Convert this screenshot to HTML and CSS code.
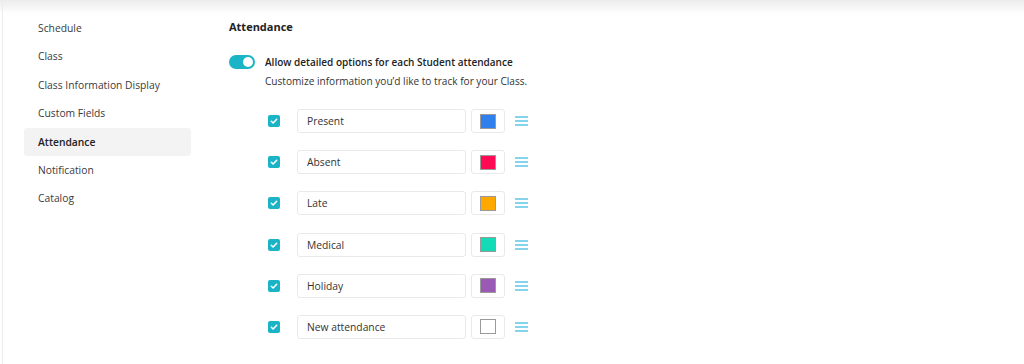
FILE: index.html
```html
<!DOCTYPE html>
<html lang="en">
<head>
    <meta charset="UTF-8">
    <title>Class Settings - Attendance</title>
    <link rel="stylesheet" href="styles.css">
</head>
<body>
    <div class="topshade"></div>
    <div class="page">
        <ul class="sidebar">
            <li>Schedule</li>
            <li>Class</li>
            <li>Class Information Display</li>
            <li>Custom Fields</li>
            <li class="active">Attendance</li>
            <li>Notification</li>
            <li>Catalog</li>
        </ul>

        <div class="content">
            <h2 class="title">Attendance</h2>

            <div class="option">
                <span class="toggle on"><span class="knob"></span></span>
                <div class="option-text">
                    <div class="option-label">Allow detailed options for each Student attendance</div>
                    <div class="option-hint">Customize information you’d like to track for your Class.</div>
                </div>
            </div>

            <div class="rows">
                <div class="row">
                    <span class="check"><svg viewBox="0 0 12 12"><path d="M3.3 6.2l1.8 1.8 3.6-3.8"/></svg></span>
                    <input class="name" type="text" value="Present">
                    <span class="swatch"><span class="color" style="background:#2f80ed"></span></span>
                    <span class="drag"><i></i><i></i><i></i></span>
                </div>
                <div class="row">
                    <span class="check"><svg viewBox="0 0 12 12"><path d="M3.3 6.2l1.8 1.8 3.6-3.8"/></svg></span>
                    <input class="name" type="text" value="Absent">
                    <span class="swatch"><span class="color" style="background:#ff0a54"></span></span>
                    <span class="drag"><i></i><i></i><i></i></span>
                </div>
                <div class="row">
                    <span class="check"><svg viewBox="0 0 12 12"><path d="M3.3 6.2l1.8 1.8 3.6-3.8"/></svg></span>
                    <input class="name" type="text" value="Late">
                    <span class="swatch"><span class="color" style="background:#ffa800"></span></span>
                    <span class="drag"><i></i><i></i><i></i></span>
                </div>
                <div class="row">
                    <span class="check"><svg viewBox="0 0 12 12"><path d="M3.3 6.2l1.8 1.8 3.6-3.8"/></svg></span>
                    <input class="name" type="text" value="Medical">
                    <span class="swatch"><span class="color" style="background:#12dbb5"></span></span>
                    <span class="drag"><i></i><i></i><i></i></span>
                </div>
                <div class="row">
                    <span class="check"><svg viewBox="0 0 12 12"><path d="M3.3 6.2l1.8 1.8 3.6-3.8"/></svg></span>
                    <input class="name" type="text" value="Holiday">
                    <span class="swatch"><span class="color" style="background:#9b59b6"></span></span>
                    <span class="drag"><i></i><i></i><i></i></span>
                </div>
                <div class="row">
                    <span class="check"><svg viewBox="0 0 12 12"><path d="M3.3 6.2l1.8 1.8 3.6-3.8"/></svg></span>
                    <input class="name" type="text" value="New attendance">
                    <span class="swatch"><span class="color" style="background:#ffffff"></span></span>
                    <span class="drag"><i></i><i></i><i></i></span>
                </div>
            </div>
        </div>
    </div>
</body>
</html>
```
FILE: styles.css
```css
* {
    box-sizing: border-box;
}
body {
    margin: 0;
    background: white;
    font-family: "Open Sans", "Liberation Sans", sans-serif;
    color: #333;
    position: relative;
}
.topshade {
    position: absolute;
    top: 0;
    left: 0;
    right: 0;
    height: 14px;
    background: linear-gradient(#ececec, rgba(255, 255, 255, 0));
}
.page {
    display: flex;
    margin-left: 2px;
    min-height: 364px;
    border-left: 1px solid #ececec;
}

/* left menu */
.sidebar {
    list-style: none;
    margin: 0;
    padding: 14px 0 0 21px;
    width: 188px;
}
.sidebar li {
    height: 28.4px;
    line-height: 28.4px;
    padding-left: 14px;
    font-size: 10.3px;
    color: #3a3a3a;
    border-radius: 3px;
}
.sidebar li.active {
    background: #f3f3f3;
    font-weight: 600;
    color: #222;
}

/* right side */
.content {
    padding-left: 38px;
    padding-top: 19px;
}
.title {
    margin: 0;
    font-size: 11px;
    font-weight: 700;
    color: #222;
    line-height: 16px;
}
.option {
    display: flex;
    margin-top: 19px;
}
.toggle {
    width: 26px;
    height: 14px;
    border-radius: 7px;
    background: #1ab4c6;
    margin-top: 1px;
    margin-right: 10px;
    position: relative;
    flex-shrink: 0;
}
.toggle .knob {
    position: absolute;
    top: 2px;
    right: 2px;
    width: 10px;
    height: 10px;
    border-radius: 50%;
    background: white;
}
.option-label {
    font-size: 10px;
    font-weight: 600;
    color: #222;
    line-height: 16px;
}
.option-hint {
    font-size: 10.1px;
    color: #333;
    line-height: 15px;
    margin-top: 4px;
}

.rows {
    margin-top: 20px;
    padding-left: 39px;
    display: flex;
    flex-direction: column;
    gap: 17.2px;
}
.row {
    display: flex;
    align-items: center;
    height: 24px;
}
.check {
    width: 12px;
    height: 12px;
    border-radius: 2px;
    background: #1ab4c6;
    display: flex;
    margin-right: 17px;
}
.check svg {
    width: 12px;
    height: 12px;
    fill: none;
    stroke: white;
    stroke-width: 1.5;
    stroke-linecap: round;
    stroke-linejoin: round;
}
.name {
    width: 169px;
    height: 24px;
    border: 1px solid #e9e9e9;
    border-radius: 3px;
    padding: 0 9px;
    font-family: inherit;
    font-size: 10.3px;
    color: #333;
    outline: none;
}
.swatch {
    width: 34px;
    height: 24px;
    margin-left: 5px;
    border: 1px solid #e9e9e9;
    border-radius: 3px;
    display: flex;
    align-items: center;
    justify-content: center;
}
.swatch .color {
    width: 16px;
    height: 15px;
    border: 1px solid #9a9a9a;
}
.drag {
    margin-left: 10px;
    width: 13px;
    display: flex;
    flex-direction: column;
    gap: 2px;
}
.drag i {
    display: block;
    height: 2px;
    background: #86d3ec;
}
```
